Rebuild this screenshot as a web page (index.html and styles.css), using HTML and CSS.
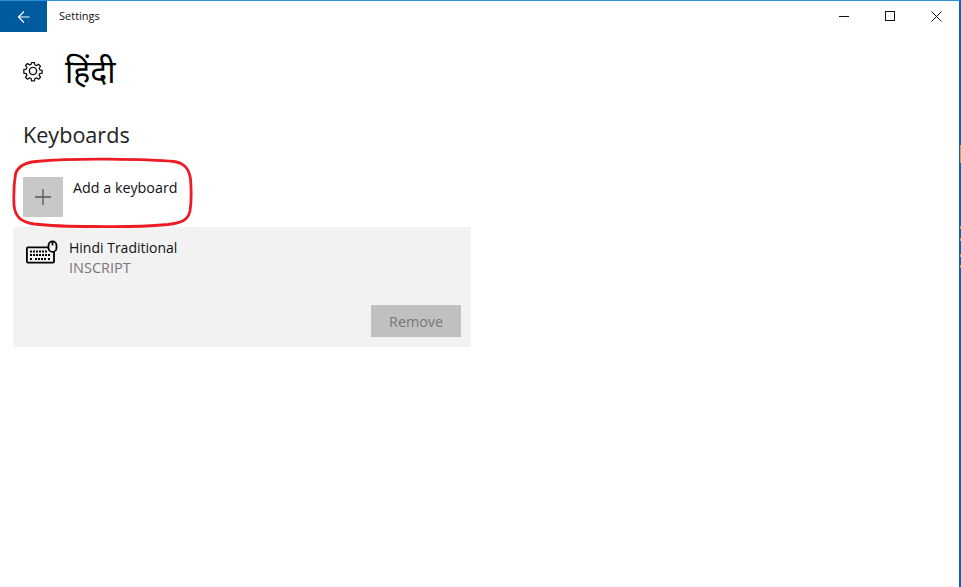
FILE: index.html
```
<!DOCTYPE html>
<html lang="en">
<head>
<meta charset="utf-8">
<title>Settings</title>
<link rel="stylesheet" href="styles.css">
</head>
<body>
<div class="window">
  <header class="titlebar">
    <div class="back">
      <svg width="14" height="14" viewBox="0 0 14 14" fill="none" stroke="#fff" stroke-width="1.2"><path d="M12.5 7H1.5M7 1.5 1.5 7 7 12.5"/></svg>
    </div>
    <span class="apptitle">Settings</span>
    <div class="controls">
      <span class="ctl"><svg width="11" height="11" viewBox="0 0 11 11" stroke="#111" stroke-width="1" fill="none"><path d="M0 5.5H10"/></svg></span>
      <span class="ctl"><svg width="11" height="11" viewBox="0 0 11 11" stroke="#111" stroke-width="1" fill="none"><rect x=".5" y=".5" width="9" height="9"/></svg></span>
      <span class="ctl"><svg width="11" height="11" viewBox="0 0 11 11" stroke="#111" stroke-width="1" fill="none"><path d="M.5.5 10.5 10.5M10.5.5 .5 10.5"/></svg></span>
    </div>
  </header>
  <main class="content">
    <div class="pagehead">
      <svg class="gear" width="22" height="22" viewBox="0 0 22 22" fill="none" stroke="#111" stroke-width="1.400" stroke-linejoin="round"><path d="M9.4 1.6h3.2l.5 2.7 1.7.7 2.3-1.5 2.2 2.200-1.500 2.300.7 1.700 2.700.5v3.200l-2.700.5-.7 1.700 1.500 2.300-2.200 2.200-2.300-1.500-1.700.7-.5 2.700H9.400l-.5-2.700-1.700-.7-2.300 1.500-2.200-2.200 1.500-2.300-.7-1.700-2.700-.5V9.400l2.700-.5.7-1.700-1.500-2.300 2.200-2.200 2.300 1.500 1.700-.7z" transform="translate(1.100 1.100) scale(.9)"/><circle cx="11" cy="11" r="3.600"/></svg>
      <h1 class="lang">हिंदी</h1>
    </div>
    <h2 class="section">Keyboards</h2>
    <div class="addrow">
      <span class="addtile"><svg width="16" height="16" viewBox="0 0 16 16" stroke="#555" stroke-width="1.300"><path d="M8 0V16M0 8H16"/></svg></span>
      <span class="addlabel">Add a keyboard</span>
      <svg class="ring" width="182" height="72" viewBox="0 0 182 72" fill="none" stroke="#ed1c24" stroke-width="2.800"><path d="M24 4.500C52 2 72 2 96 2.200 124 2.500 146 3 162 4.500 172 6 177 11 178.500 22 179.500 34 179.500 44 178 54 176 63 170 66 156 67.500 132 69.500 108 70 84 69.500 60 69.500 38 69 22 67 9 65 3 60 2 48 1.500 36 1.700 28 3.500 17 6 9 13 5.500 24 4.500Z"/></svg>
    </div>
    <section class="card">
      <div class="cardrow">
        <svg class="kbd" width="33" height="26" viewBox="0 0 33 26" fill="none" stroke="#000" stroke-width="1.800"><path d="M23.500 8.400H2.900Q1.900 8.400 1.900 9.400V22.600Q1.900 23.600 2.900 23.600H28Q29 23.600 29 22.600V13"/><path d="M5 12.400h17M5 15.900h21M5 19.900h3M10 19.900h11M23 19.900h3" stroke-width="2" stroke-dasharray="2 1"/><rect x="23.500" y="2.400" width="8" height="10.500" rx="4" fill="#f2f2f2"/><path d="M27.500 2.400v4"/></svg>
        <div class="names">
          <div class="name">Hindi Traditional</div>
          <div class="sub">INSCRIPT</div>
        </div>
      </div>
      <div class="actions"><span class="remove">Remove</span></div>
    </section>
  </main>
</div>
<div class="edge"></div>
</body>
</html>
```
FILE: styles.css
```
* { box-sizing: border-box; }
html, body { margin: 0; height: 100%; background: #fff; }
body { position: relative; font-family: "Open Sans", "Noto Sans", "Liberation Sans", sans-serif; color: #000; }
.window { width: 961px; height: 587px; border-top: 1px solid #2b90d9; border-right: 2px solid #0a63b5; overflow: hidden; }
.titlebar { display: flex; align-items: center; height: 31px; }
.back { width: 47px; height: 31px; background: #005a9e; display: flex; align-items: center; justify-content: center; }
.apptitle { margin: 0 0 2px 12px; font-size: 11px; color: #111; }
.controls { display: flex; margin-left: auto; }
.ctl { width: 46px; height: 31px; display: flex; align-items: center; justify-content: center; }
.content { padding: 0 0 0 13px; }
.pagehead { display: flex; align-items: center; height: 56px; padding-left: 9px; margin-top: 11px; }
.gear { flex: none; }
.lang { margin: 0 0 0 21px; font: 400 32px/1 "Noto Sans", "Noto Sans Devanagari", "Lohit Devanagari", "DejaVu Sans", sans-serif; }
.section { margin: 22px 0 0 10px; font-size: 21.600px; line-height: 28px; font-weight: 400; color: #222; }
.addrow { position: relative; display: flex; align-items: flex-start; height: 40px; margin: 28px 0 0 10px; }
.addtile { width: 40px; height: 40px; background: #c8c8c8; display: flex; align-items: center; justify-content: center; }
.addlabel { margin: 1px 0 0 10px; font-size: 14.300px; line-height: 20px; color: #111; }
.ring { position: absolute; left: -11px; top: -20px; }
.card { width: 458px; height: 120px; margin-top: 10px; background: #f2f2f2; display: flex; flex-direction: column; justify-content: space-between; padding: 11px 10px 10px 12px; }
.cardrow { display: flex; align-items: flex-start; }
.kbd { margin-top: 1px; flex: none; }
.names { margin-left: 11px; font-size: 14px; line-height: 20px; }
.name { color: #111; }
.sub { color: #777; font-size: 14.500px; }
.actions { display: flex; justify-content: flex-end; }
.remove { width: 90px; height: 32px; background: #c0c0c0; color: #777; font-size: 14.300px; display: flex; align-items: center; justify-content: center; }
.edge { position: absolute; left: 960px; top: 0; width: 1px; height: 587px; background: linear-gradient(to bottom, transparent 145px, #c9a050 145px, #c9a050 163px, transparent 163px, transparent 226px, #c9a050 226px, #c9a050 229px, transparent 229px, transparent 238px, #c9a050 238px, #c9a050 241px, transparent 241px, transparent 254px, #c9a050 254px, #c9a050 257px, transparent 257px, transparent 265px, #c9a050 265px, #c9a050 268px, transparent 268px); }
```
